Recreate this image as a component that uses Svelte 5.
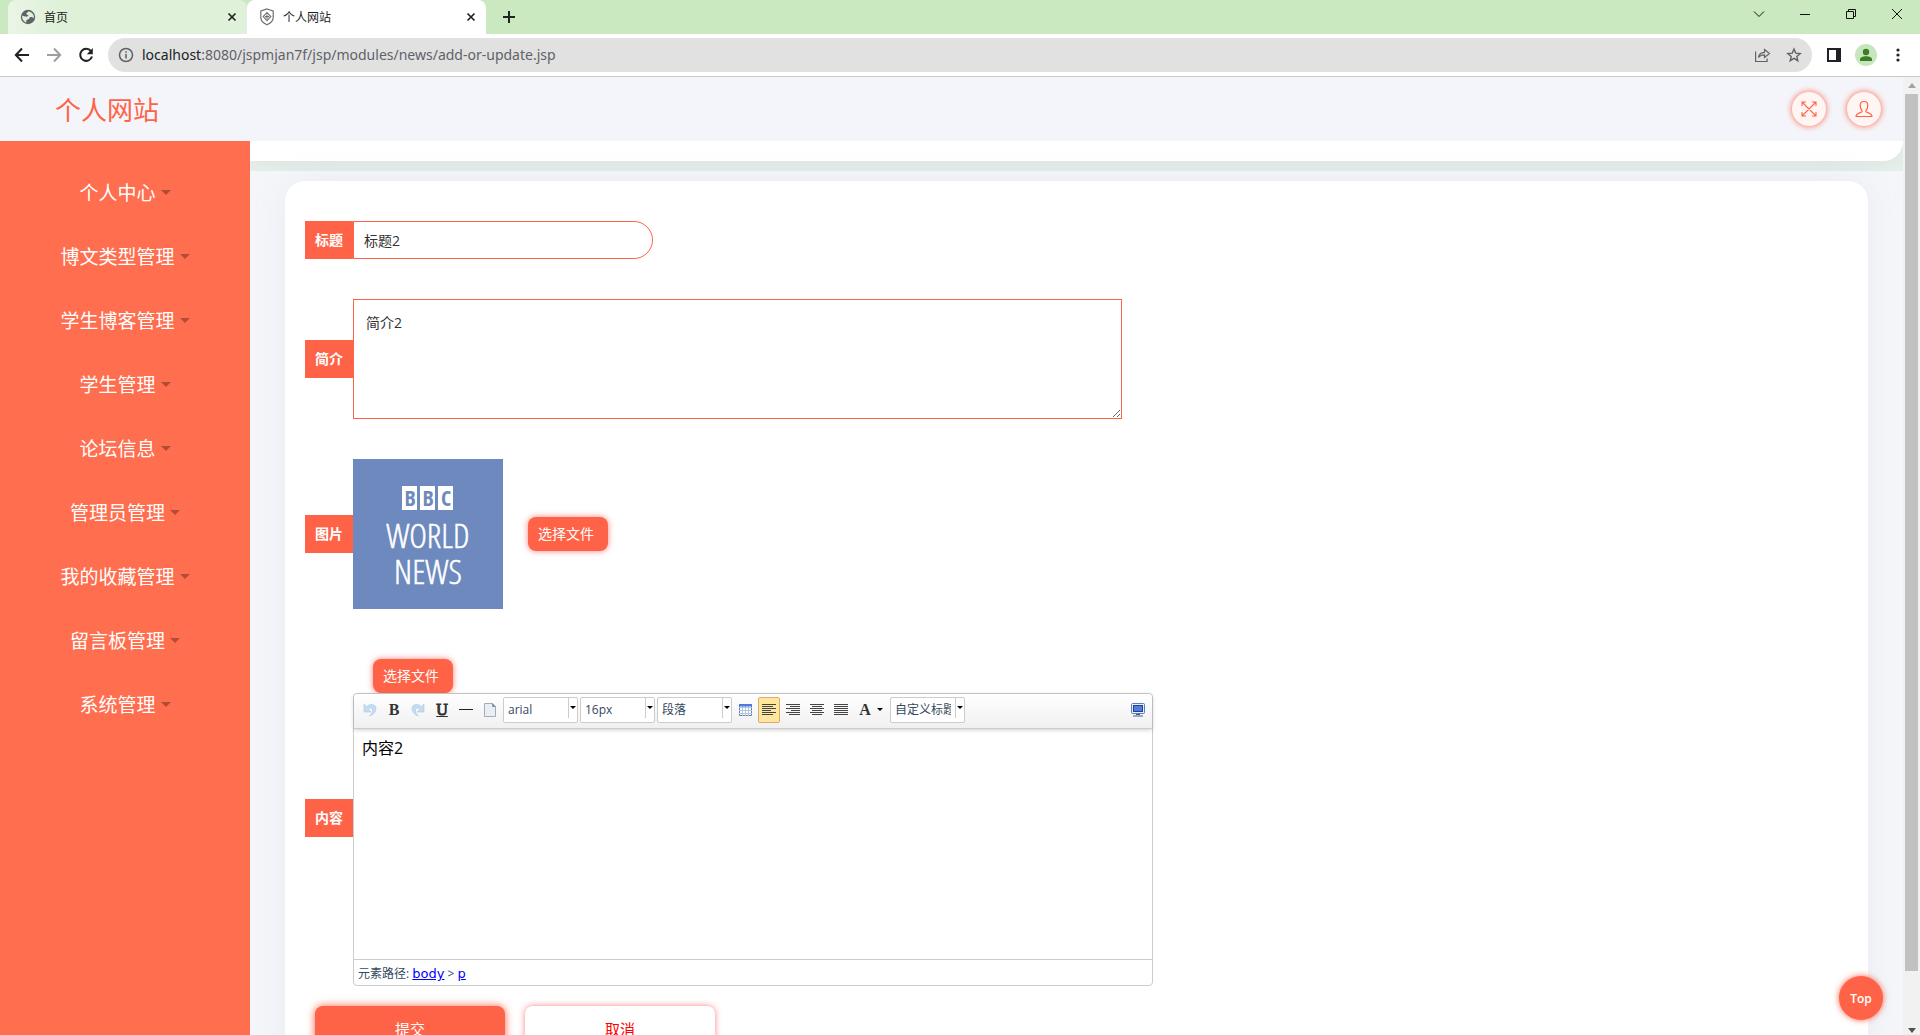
<script>
  const tabs = [
    { title: '首页', icon: 'globe', active: false },
    { title: '个人网站', icon: 'shield', active: true }
  ];

  const menu = [
    '个人中心', '博文类型管理', '学生博客管理', '学生管理', '论坛信息',
    '管理员管理', '我的收藏管理', '留言板管理', '系统管理'
  ];

  // left and right end of each text line in the alignment icons
  const aligns = [
    { name: '居左对齐', active: true, lines: [[3, 17], [3, 14], [3, 17], [3, 12], [3, 17], [3, 14]] },
    { name: '居右对齐', lines: [[3, 17], [7, 17], [3, 17], [8, 17], [3, 17], [6, 17]] },
    { name: '居中对齐', lines: [[3, 17], [5, 15], [3, 17], [5, 15], [3, 17], [5, 15]] },
    { name: '两端对齐', lines: [[3, 17], [3, 17], [3, 17], [3, 17], [3, 17], [3, 17]] }
  ];

  let title = $state('标题2');
  let intro = $state('简介2');
</script>

{#snippet combo(label, value)}
  <span class="combo">
    <select aria-label={label}><option>{value}</option></select>
    <i></i>
  </span>
{/snippet}

<div class="window">
  <div class="tabstrip">
    {#each tabs as tab}
      <div class="tab" class:active={tab.active}>
        {#if tab.icon === 'globe'}
          <svg width="16" height="16" viewBox="0 0 16 16">
            <circle cx="8" cy="8" r="7.2" fill="#5f6368" />
            <path d="M8.5 2.2c-.6 1.500-2.200 1.300-2.200 2.600 0 1.200 2 .8 2 2 0 .9-1.500.9-3 .8-1.500-.1-2.400-.6-3.200-1C1.800 10 3.500 12.600 6.200 13.700c.1-1.300-.2-2.300.8-2.900 1-.5 2.300-.2 2.500-1.700.1-1.100 1-1.200 2-1 1 .2 1.900.8 2.500.6 0-3-2-5.700-5.500-6.500z" fill="#dff1d9" />
          </svg>
        {:else}
          <svg width="16" height="18" viewBox="0 0 16 18" fill="none" stroke="#6b6f73">
            <path d="M8 1l6.200 2v6.500c0 3.500-2.800 5.800-6.200 7.300-3.400-1.500-6.200-3.800-6.200-7.300V3z" stroke-width="1.200" />
            <path d="M8 4.500L11.800 8.600 8 12.700 4.200 8.600zM8 6.500v4.200M5.900 8.600h4.200" stroke-width="1.100" />
          </svg>
        {/if}
        <span>{tab.title}</span>
        <button aria-label="关闭标签页">
          <svg width="10" height="10" viewBox="0 0 10 10"><path d="M1.500 1.500l7 7M8.500 1.500l-7 7" stroke="#222" stroke-width="1.700" /></svg>
        </button>
      </div>
    {/each}
    <button class="plus" aria-label="新标签页">
      <svg width="14" height="14" viewBox="0 0 14 14"><path d="M7 1v12M1 7h12" stroke="#222" stroke-width="2" /></svg>
    </button>
    <div class="controls">
      <button aria-label="搜索标签页"><svg width="12" height="12" viewBox="0 0 12 12"><path d="M1 3.500l5 5 5-5" /></svg></button>
      <button aria-label="最小化"><svg width="12" height="12" viewBox="0 0 12 12"><path d="M1 6.500h10" /></svg></button>
      <button aria-label="还原"><svg width="12" height="12" viewBox="0 0 12 12"><path d="M1.500 3.500h7v7h-7zM3.500 3.500v-2h7v7h-2" /></svg></button>
      <button aria-label="关闭"><svg width="12" height="12" viewBox="0 0 12 12"><path d="M1 1l10 10M11 1L1 11" /></svg></button>
    </div>
  </div>

  <div class="navbar">
    <div class="nav-buttons">
      <button aria-label="后退"><svg width="16" height="16" viewBox="0 0 16 16" fill="none" stroke="#202124" stroke-width="2"><path d="M15 8H2M8 1.500L1.800 8 8 14.500" /></svg></button>
      <button aria-label="前进"><svg width="16" height="16" viewBox="0 0 16 16" fill="none" stroke="#9c9ea1" stroke-width="2"><path d="M1 8h13M8 1.500L14.200 8 8 14.500" /></svg></button>
      <button aria-label="刷新"><svg width="16" height="16" viewBox="0 0 16 16" fill="none" stroke="#202124" stroke-width="2"><path d="M13 4.200A6 6 0 1 0 14 9.500" /><path d="M14.800 1v6.200H8.800z" fill="#202124" stroke="none" /></svg></button>
    </div>
    <div class="address">
      <svg width="16" height="16" viewBox="0 0 16 16" fill="none" stroke="#5f6368"><circle cx="8" cy="8" r="6.500" stroke-width="1.500" /><path d="M8 7v4.500M8 4.200v1.600" stroke-width="1.600" /></svg>
      <span class="url"><b>localhost</b>:8080/jspmjan7f/jsp/modules/news/add-or-update.jsp</span>
      <svg width="17" height="16" viewBox="0 0 17 16" fill="none" stroke="#5f6368" stroke-width="1.200"><path d="M1.600 4.500v10h11.500v-3" /><path d="M4.500 10.500c.5-3.500 2.500-5 6-5.200V2.500l5 4-5 4V7.800c-2.500 0-4.500.7-6 2.700z" /></svg>
      <svg width="16" height="16" viewBox="0 0 16 16" fill="none" stroke="#5f6368" stroke-width="1.400"><path d="M8 2l1.700 4.100 4.500.4-3.400 2.900 1 4.300L8 11.400l-3.800 2.300 1-4.300-3.400-2.900 4.500-.4z" /></svg>
    </div>
    <div class="extras">
      <svg width="14" height="14" viewBox="0 0 14 14"><path d="M1 1h12v12H1z" fill="#fff" stroke="#202124" stroke-width="2" /><path d="M9 1h4v12H9z" fill="#202124" /></svg>
      <svg width="22" height="22" viewBox="0 0 22 22"><circle cx="11" cy="11" r="11" fill="#c8e6bd" /><circle cx="11" cy="8" r="3.200" fill="#3b7d23" /><path d="M5 17v-1.500c0-2.200 3-3.300 6-3.300s6 1.100 6 3.300V17z" fill="#3b7d23" /></svg>
      <svg width="14" height="14" viewBox="0 0 14 14" fill="#202124"><circle cx="7" cy="2" r="1.600" /><circle cx="7" cy="7" r="1.600" /><circle cx="7" cy="12" r="1.600" /></svg>
    </div>
  </div>

  <div class="viewport">
    <div class="page">
      <header>
        <h1>个人网站</h1>
        <button class="round" aria-label="全屏">
          <svg width="16" height="16" viewBox="0 0 16 16" fill="none" stroke="#ff6347" stroke-width="1.100"><path d="M1.500 1.500l13 13M14.500 1.500l-13 13M1 5V1h4M11 1h4v4M15 11v4h-4M5 15H1v-4" /></svg>
        </button>
        <button class="round" aria-label="用户">
          <svg width="18" height="18" viewBox="0 0 18 18" fill="none" stroke="#ff6347" stroke-width="1.200"><path d="M7 10.200C5.500 9 5.200 7.200 5.200 5.200 5.200 2.800 6.800 1.500 9 1.500s3.800 1.300 3.800 3.700c0 2-.3 3.800-1.800 5v1.600c0 .6 5.800 1 6 4.700H1c.2-3.700 6-4.100 6-4.700z" /></svg>
        </button>
      </header>

      <div class="body">
        <nav>
          {#each menu as item}
            <a href="#menu">{item}<i></i></a>
          {/each}
        </nav>

        <main>
          <div class="breadcrumb"><div></div></div>

          <form class="card" onsubmit={(e) => e.preventDefault()}>
            <div class="row">
              <label for="title">标题</label>
              <input id="title" type="text" bind:value={title} />
            </div>

            <div class="row">
              <label for="intro">简介</label>
              <textarea id="intro" bind:value={intro}></textarea>
            </div>

            <div class="row">
              <label for="picture">图片</label>
              <svg class="picture" width="150" height="150" viewBox="0 0 150 150">
                <rect width="150" height="150" fill="#6d89bd" />
                <g fill="#fff"><rect x="49" y="27" width="15" height="24" /><rect x="67" y="27" width="15" height="24" /><rect x="85" y="27" width="15" height="24" /></g>
                <g class="bbc"><text x="57" y="47">B</text><text x="75" y="47">B</text><text x="93" y="47">C</text></g>
                <g class="news"><text x="75" y="89">WORLD</text><text x="75" y="125">NEWS</text></g>
              </svg>
              <button type="button" id="picture" class="file">选择文件</button>
            </div>

            <div class="row">
              <label for="content">内容</label>
              <div class="content">
                <button type="button" class="file">选择文件</button>
                <div class="editor">
                  <div class="toolbar">
                    <button type="button" aria-label="撤销"><svg width="20" height="20" viewBox="0 0 20 20"><path d="M4 4v8h7L8.500 9.500C10.500 7 13 8 12.500 11c-.2 2-1.500 3.500-3 5 4-1.500 6.500-4 6.500-7.500C16 4 10 3 6.500 6.800z" fill="#c3dcf2" stroke="#a9cbea" stroke-width=".6" /></svg></button>
                    <button type="button" class="serif" aria-label="加粗">B</button>
                    <button type="button" aria-label="重做"><svg width="20" height="20" viewBox="0 0 20 20"><path d="M16 4v8H9l2.500-2.500C9.500 7 7 8 7.500 11c.2 2 1.500 3.500 3 5C6.500 14.500 4 12 4 8.500 4 4 10 3 13.500 6.800z" fill="#c3dcf2" stroke="#a9cbea" stroke-width=".6" /></svg></button>
                    <button type="button" class="serif under" aria-label="下划线">U</button>
                    <button type="button" aria-label="分隔线"><svg width="20" height="20" viewBox="0 0 20 20"><path d="M3 9.500h14" stroke="#222" /></svg></button>
                    <button type="button" aria-label="清空文档"><svg width="20" height="20" viewBox="0 0 20 20"><path d="M4.500 3.500h8l3 3v10h-11z" fill="#e9eef4" stroke="#a3abb5" /><path d="M12.500 3.500v3h3" fill="#8492a3" stroke="#8492a3" /></svg></button>
                    <div class="combos">
                      {@render combo('字体', 'arial')}
                      {@render combo('字号', '16px')}
                      {@render combo('段落格式', '段落')}
                    </div>
                    <button type="button" aria-label="插入表格"><svg width="20" height="20" viewBox="0 0 20 20"><path d="M4.500 4.500h12v11h-12z" fill="#fff" stroke="#6482b4" /><path d="M4 7.500h13M4 10.500h13M4 13.500h13M7.500 6v10M10.500 6v10M13.500 6v10" stroke="#b4c4df" /><path d="M4 4h13v2.500H4z" fill="#4a7bdc" /></svg></button>
                    {#each aligns as a}
                      <button type="button" class:on={a.active} aria-label={a.name}>
                        <svg width="20" height="20" viewBox="0 0 20 20" stroke="#444">
                          {#each a.lines as [from, to], i}
                            <path d="M{from} {4.5 + i * 2}h{to - from}" />
                          {/each}
                        </svg>
                      </button>
                    {/each}
                    <button type="button" class="serif color" aria-label="字体颜色">A<i></i></button>
                    {@render combo('自定义标题', '自定义标题')}
                    <button type="button" class="screen" aria-label="全屏编辑"><svg width="20" height="20" viewBox="0 0 20 20"><rect x="3.500" y="3.500" width="13" height="10" rx="1" fill="#e8eef8" stroke="#5d7bb5" /><rect x="5.500" y="5.500" width="9" height="6" fill="#4f7ae0" stroke="#26418b" /><path d="M8 14.500h4M5 16h10" stroke="#3e5c9c" /></svg></button>
                  </div>
                  <div class="edit" id="content" contenteditable="true" role="textbox" tabindex="0" aria-label="内容">内容2</div>
                  <div class="path">元素路径: <a href="#body">body</a> &gt; <a href="#p">p</a></div>
                </div>
              </div>
            </div>

            <div class="actions">
              <button class="submit">提交</button>
              <button type="button" class="cancel">取消</button>
            </div>
          </form>
        </main>
      </div>

      <button class="top">Top</button>
    </div>

    <div class="scrollbar"><i class="up"></i><div></div><i class="down"></i></div>
  </div>
</div>

<style>
  :global(body) { margin: 0; }
  .window, button, input, textarea, select {
    font-family: "Open Sans", "Noto Sans CJK SC", sans-serif;
  }
  .window, .window * { box-sizing: border-box; }
  .window {
    height: 100vh;
    display: flex;
    flex-direction: column;
    overflow: hidden;
    font-size: 14px;
    color: #333;
  }
  button { border: 0; padding: 0; background: none; cursor: pointer; }
  svg { display: block; flex: none; }

  /* browser frame */
  .tabstrip { height: 34px; flex: none; display: flex; background: #cbe9c0; padding-left: 8px; }
  .tab {
    width: 239px;
    display: flex;
    align-items: center;
    gap: 8px;
    padding: 0 10px 0 12px;
    border-radius: 8px 8px 0 0;
    background: linear-gradient(90deg, #eaf5e6, #dff1d9 50px);
    font-size: 12px;
    color: #222;
  }
  .tab.active { background: #fff; }
  .tab span { flex: 1; }
  .plus { margin-left: 16px; }
  .controls { margin-left: auto; display: flex; }
  .controls button { width: 46px; height: 28px; display: grid; place-items: center; }
  .controls svg { fill: none; stroke: #111; }
  .navbar {
    height: 43px;
    flex: none;
    display: flex;
    align-items: center;
    padding: 0 15px 1px 14px;
    background: #fff;
    border-bottom: 1px solid #c8cbc6;
  }
  .nav-buttons { display: flex; gap: 16px; padding-right: 14px; }
  .address {
    flex: 1;
    height: 34px;
    display: flex;
    align-items: center;
    gap: 15px;
    padding: 0 10px;
    border-radius: 17px;
    background: #e1e1e1;
  }
  .url { flex: 1; margin-left: -7px; font-size: 14px; color: #5f6368; font-family: "Noto Sans", sans-serif; }
  .url b { font-weight: 400; color: #202124; }
  .extras { display: flex; align-items: center; gap: 14px; padding-left: 15px; }

  .viewport { flex: 1; min-height: 0; display: flex; }
  .page {
    flex: 1;
    min-width: 0;
    display: flex;
    flex-direction: column;
    position: relative;
    overflow: hidden;
    background: #f4f6fa;
  }
  .scrollbar {
    width: 17px;
    display: flex;
    flex-direction: column;
    align-items: center;
    padding: 6px 0 2px;
    background: #f1f1f1;
  }
  .scrollbar div { width: 13px; flex: 1; margin: 6px 0 57px; background: #c1c1c1; }
  .up, .down { border: 4px solid transparent; }
  .up { border-top: 0; border-bottom: 5px solid #a3a3a3; }
  .down { border-bottom: 0; border-top: 5px solid #505050; }

  header {
    height: 64px;
    flex: none;
    display: flex;
    align-items: center;
    gap: 21px;
    padding: 0 22px 1px 55px;
    background: #f4f5fa;
  }
  h1 { flex: 1; margin: 0; font-size: 26px; font-weight: 400; color: #ff6347; }
  .round {
    width: 34px;
    height: 34px;
    display: grid;
    place-items: center;
    border-radius: 50%;
    background: #fff5f3;
    box-shadow: 0 0 6px #ff6347;
  }

  .body { flex: 1; min-height: 0; display: flex; }
  nav { width: 250px; flex: none; padding-top: 19px; background: #ff6e4e; }
  nav a {
    height: 64px;
    display: flex;
    align-items: center;
    justify-content: center;
    gap: 5px;
    color: #fff;
    font-size: 19px;
    text-decoration: none;
  }
  nav i { border: 5px solid transparent; border-top-color: #b24c36; border-bottom: 0; }

  main { flex: 1; min-width: 0; }
  .breadcrumb { height: 30px; background: #e4f1eb; overflow: hidden; }
  .breadcrumb div {
    height: 20px;
    border-radius: 0 0 20px 0;
    background: #fff;
    box-shadow: 0 0 20px rgba(220, 180, 200, .3);
  }
  .card {
    margin: 10px 35px 0;
    padding: 40px 20px 30px;
    border-radius: 20px;
    background: #fff;
    box-shadow: 0 0 35px rgba(154, 161, 171, .12);
  }
  .row { display: flex; align-items: center; margin-bottom: 40px; }
  label {
    width: 48px;
    height: 38px;
    flex: none;
    line-height: 38px;
    text-align: center;
    font-weight: 700;
    color: #fff;
    background: #ff6347;
  }
  input {
    width: 300px;
    height: 38px;
    padding: 0 10px;
    border: 1px solid #ff6347;
    border-radius: 0 20px 20px 0;
    font-size: 14px;
    color: #333;
    outline: 0;
  }
  textarea {
    width: 769px;
    height: 120px;
    padding: 12px;
    border: 1px solid #ff6347;
    font-size: 14px;
    line-height: 22px;
    color: #333;
    outline: 0;
  }
  .picture { margin-right: 25px; }
  .picture text { text-anchor: middle; }
  .bbc { font: 700 22px "Open Sans Condensed", "Lato", sans-serif; fill: #6d89bd; }
  .news { font: 300 34px "Open Sans Condensed Light", "Open Sans Condensed", "Lato", sans-serif; fill: #fff; stroke: #fff; stroke-width: .5; }
  .file {
    height: 34px;
    padding: 0 14px 2px 10px;
    border-radius: 8px;
    font-size: 14px;
    color: #fff;
    background: #ff6347;
    box-shadow: 0 0 6px rgba(255, 0, 0, .5);
  }
  .content { width: 800px; }
  .content .file { display: block; margin: 10px 0 0 20px; }
  .row:has(.content) { margin-bottom: 20px; }

  .editor {
    position: relative;
    border: 1px solid #ccc;
    border-radius: 4px;
    background: #fff;
  }
  .toolbar {
    height: 35px;
    display: flex;
    align-items: center;
    gap: 2px;
    padding: 0 3px 3px 5px;
    border-bottom: 1px solid #ccc;
    border-radius: 4px 4px 0 0;
    background: linear-gradient(#fff, #f0f0f0);
    box-shadow: 0 1px 4px rgba(0, 0, 0, .2);
  }
  .toolbar button { width: 22px; height: 26px; display: grid; place-items: center; flex: none; }
  .toolbar .serif { font: 700 16px "Liberation Serif", serif; color: #333; }
  .toolbar .under { font-weight: 400; text-decoration: underline; -webkit-text-stroke: 1px #333; }
  .toolbar .color { width: 34px; display: flex; align-items: center; justify-content: center; gap: 6px; }
  .color i, .combo i::after { border: 3px solid transparent; border-top: 3px solid #000; border-bottom: 0; }
  .toolbar .on { background: #ffe69f; border: 1px solid #dcac6c; border-radius: 2px; }
  .toolbar .screen { margin-left: auto; }
  .combos { display: flex; gap: 2px; }
  .combo {
    width: 75px;
    height: 26px;
    display: flex;
    border: 1px solid #ccc;
    border-radius: 2px;
    background: #fff;
    overflow: hidden;
  }
  .combo select {
    width: 64px;
    padding: 0 4px;
    appearance: none;
    border: 0;
    background: none;
    font-size: 12px;
    color: #34495e;
    outline: 0;
  }
  .combo i { width: 9px; height: 20px; display: grid; place-items: center; border-left: 1px solid #ccc; }
  .combo i::after { content: ''; }
  .edit { height: 230px; padding: 7px 8px; font-size: 16px; line-height: 24px; color: #000; outline: 0; }
  .path { height: 26px; padding: 0 4px; border-top: 1px solid #ccc; font-size: 12px; line-height: 27px; color: #34495e; }
  .path a { font-family: "DejaVu Sans", sans-serif; font-size: 13px; color: #00f; }

  .actions { display: flex; gap: 20px; padding-left: 10px; }
  .actions button { width: 190px; height: 46px; padding-bottom: 2px; border-radius: 8px; font-size: 15px; }
  .submit { color: #fff; background: #ff6347; box-shadow: 0 0 8px #ff6347; }
  .cancel { color: #f00; background: #fff; box-shadow: 0 0 6px rgba(255, 0, 0, .5); }
  .top {
    position: absolute;
    right: 20px;
    bottom: 15px;
    width: 44px;
    height: 44px;
    border-radius: 50%;
    font-size: 12px;
    font-weight: 600;
    color: #fff;
    background: #ff6347;
    box-shadow: 0 0 6px #ff6347;
  }
</style>
